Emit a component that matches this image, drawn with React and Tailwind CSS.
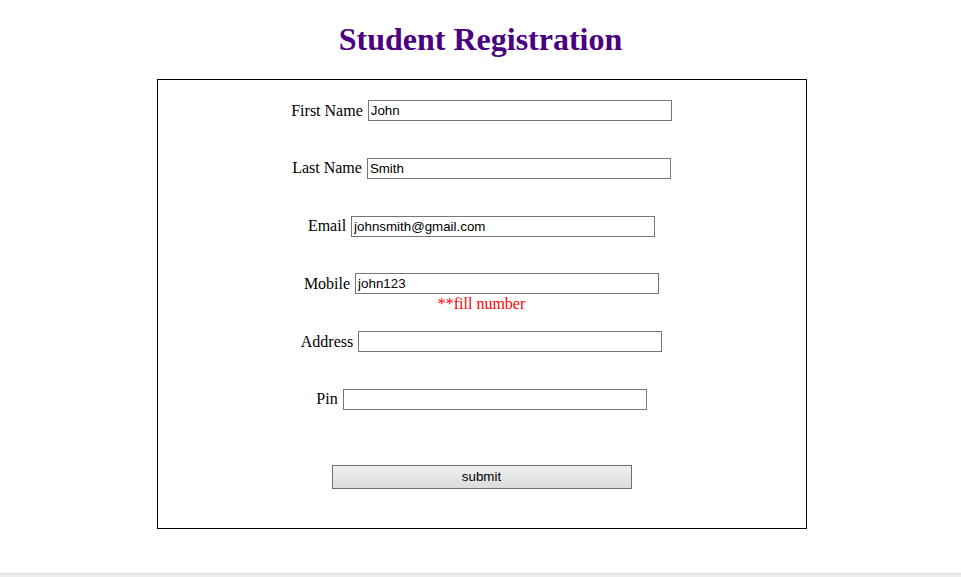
import React from 'react';

const fields = [
  { label: 'First Name', value: 'John' },
  { label: 'Last Name', value: 'Smith' },
  { label: 'Email', value: 'johnsmith@gmail.com' },
  { label: 'Mobile', value: 'john123', error: '**fill number' },
  { label: 'Address', value: '' },
  { label: 'Pin', value: '' },
];

const Row = ({ label, value, error }) => (
  <div className="h-[57.8px] flex flex-col items-center">
    <div className="flex items-center gap-[5px] h-[21px]">
      <label className="text-[16px] leading-[18px] text-black">{label}</label>
      <input
        type="text"
        defaultValue={value}
        className="w-[304px] h-[21px] border border-[#767676] bg-white px-[2px] text-[13.33px] text-black outline-none font-['Liberation_Sans',Arial,sans-serif]"
      />
    </div>
    {error && <span className="text-[16px] leading-[18px] text-[#ff0000] mt-px">{error}</span>}
  </div>
);

export default function App() {
  return (
    <div className="min-h-[577px] flex flex-col justify-between bg-white font-['Liberation_Serif','Times_New_Roman',serif]">
      <div className="flex flex-col items-center">
        <h1 className="mt-[20px] mb-[21px] text-[32px] leading-[38px] font-bold text-[#4b0082]">
          Student Registration
        </h1>
        <form className="ml-[2px] w-[650px] border border-black pt-[20px] pb-[39px] flex flex-col items-center">
          {fields.map((f) => (
            <Row key={f.label} {...f} />
          ))}
          <button
            type="button"
            className="mt-[18px] w-[300px] h-[24px] border border-[#707070] bg-gradient-to-b from-[#f0f0f0] to-[#dcdcdc] text-[13.33px] text-black font-['Liberation_Sans',Arial,sans-serif]"
          >
            submit
          </button>
        </form>
      </div>
      <div className="h-[4px] bg-[#ededed] border-t border-[#dedede]" />
    </div>
  );
}
